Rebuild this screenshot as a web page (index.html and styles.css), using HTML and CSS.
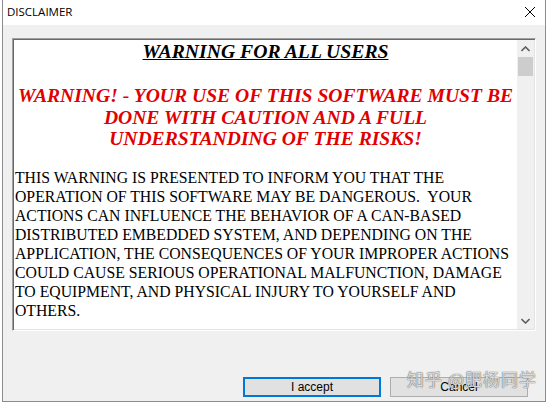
FILE: index.html
```html
<!DOCTYPE html>
<html lang="en">
<head>
  <meta charset="UTF-8" />
  <title>DISCLAIMER</title>
  <link rel="stylesheet" href="styles.css">
</head>
<body>
  <div class="window">
    <div class="titlebar">
      <span class="title">DISCLAIMER</span>
      <span class="close">
        <svg width="12" height="12" viewBox="0 0 12 12">
          <path d="M1 1 L11 11 M11 1 L1 11" stroke="#000" stroke-width="1" fill="none"/>
        </svg>
      </span>
    </div>

    <div class="client">
      <div class="textbox">
        <div class="content">
          <p class="heading">WARNING FOR ALL USERS</p>
          <p class="alert">WARNING! - YOUR USE OF THIS SOFTWARE MUST BE <br>DONE WITH CAUTION AND A FULL<br>UNDERSTANDING OF THE RISKS!</p>
          <p class="body-text">THIS WARNING IS PRESENTED TO INFORM YOU THAT THE OPERATION OF THIS SOFTWARE MAY BE DANGEROUS.&nbsp; YOUR ACTIONS CAN INFLUENCE THE BEHAVIOR OF A CAN-BASED DISTRIBUTED EMBEDDED SYSTEM, AND DEPENDING ON THE APPLICATION, THE CONSEQUENCES OF YOUR IMPROPER ACTIONS COULD CAUSE SERIOUS OPERATIONAL MALFUNCTION, DAMAGE TO EQUIPMENT, AND PHYSICAL INJURY TO YOURSELF AND OTHERS.</p>
        </div>
        <div class="scrollbar">
          <div class="arrow">
            <svg width="9" height="6" viewBox="0 0 9 6"><path d="M0.5 5 L4.5 1 L8.5 5" stroke="#606060" stroke-width="1.6" fill="none"/></svg>
          </div>
          <div class="track">
            <div class="thumb"></div>
          </div>
          <div class="arrow">
            <svg width="9" height="6" viewBox="0 0 9 6"><path d="M0.5 1 L4.5 5 L8.5 1" stroke="#606060" stroke-width="1.6" fill="none"/></svg>
          </div>
        </div>
      </div>

      <div class="buttons">
        <button class="btn default">I accept</button>
        <button class="btn">Cancel</button>
      </div>
    </div>

    <div class="watermark">知乎 @肥杨同学</div>
  </div>
</body>
</html>
```

FILE: styles.css
```css
body {
  margin: 0;
  background-color: #fff;
  font-family: "Liberation Sans", Arial, sans-serif;
}

.window {
  position: relative;
  width: 542px;
  height: 401px;
  margin-left: 2px;
  border: 1px solid #8c8c8c;
  border-top: none;
  background-color: #f0f0f0;
  display: flex;
  flex-direction: column;
}

.titlebar {
  height: 25px;
  background-color: #fff;
  display: flex;
  align-items: center;
  justify-content: space-between;
  padding: 0 9px 0 4px;
  flex-shrink: 0;
}

.title {
  font-family: "Open Sans", "Noto Sans", sans-serif;
  font-size: 11.5px;
  color: #000;
  margin-top: -2px;
}

.close {
  display: flex;
  margin-top: -2px;
}

.client {
  flex: 1;
  display: flex;
  flex-direction: column;
  padding: 13px 9px 0 9px;
}

.textbox {
  width: 520px;
  height: 289px;
  background-color: #fff;
  border-top: 1px solid #a0a0a0;
  border-left: 1px solid #a0a0a0;
  border-bottom: 1px solid #fff;
  border-right: 1px solid #fff;
  box-shadow: inset 1px 1px 0 #696969, inset -1px -1px 0 #e3e3e3;
  display: flex;
  padding: 1px;
}

.content {
  flex: 1;
  overflow: hidden;
  padding: 0 1px 0 1px;
  font-family: "Liberation Serif", "Times New Roman", serif;
  color: #000;
}

.content p {
  margin: 0;
}

.heading {
  text-align: center;
  font-weight: bold;
  font-style: italic;
  text-decoration: underline;
  font-size: 19.7px;
  line-height: 22px;
}

.alert {
  text-align: center;
  font-weight: bold;
  font-style: italic;
  color: #e00000;
  font-size: 19.6px;
  line-height: 21.5px;
  margin-top: 23px !important;
}

.body-text {
  font-size: 15.75px;
  line-height: 19px;
  margin-top: 18px !important;
  padding-right: 2px;
}

.scrollbar {
  width: 17px;
  background-color: #f0f0f0;
  display: flex;
  flex-direction: column;
}

.arrow {
  height: 17px;
  display: flex;
  align-items: center;
  justify-content: center;
}

.track {
  flex: 1;
}

.thumb {
  height: 19px;
  margin: 0 1px;
  background-color: #cdcdcd;
}

.buttons {
  display: flex;
  justify-content: flex-end;
  gap: 9px;
  margin-top: 46px;
  padding-right: 8px;
}

.btn {
  width: 138px;
  height: 20px;
  border: 1px solid #adadad;
  background-color: #e1e1e1;
  font-family: "Liberation Sans", Arial, sans-serif;
  font-size: 12px;
  color: #000;
  padding: 0;
}

.btn.default {
  border: 2px solid #0078d7;
}

.watermark {
  position: absolute;
  right: 8px;
  bottom: 10px;
  font-family: "Noto Sans CJK SC", sans-serif;
  font-size: 17px;
  color: rgba(255, 255, 255, 0.75);
  text-shadow: 0 0 1px #666, 0 0 1px #666;
  letter-spacing: 1px;
}
```
